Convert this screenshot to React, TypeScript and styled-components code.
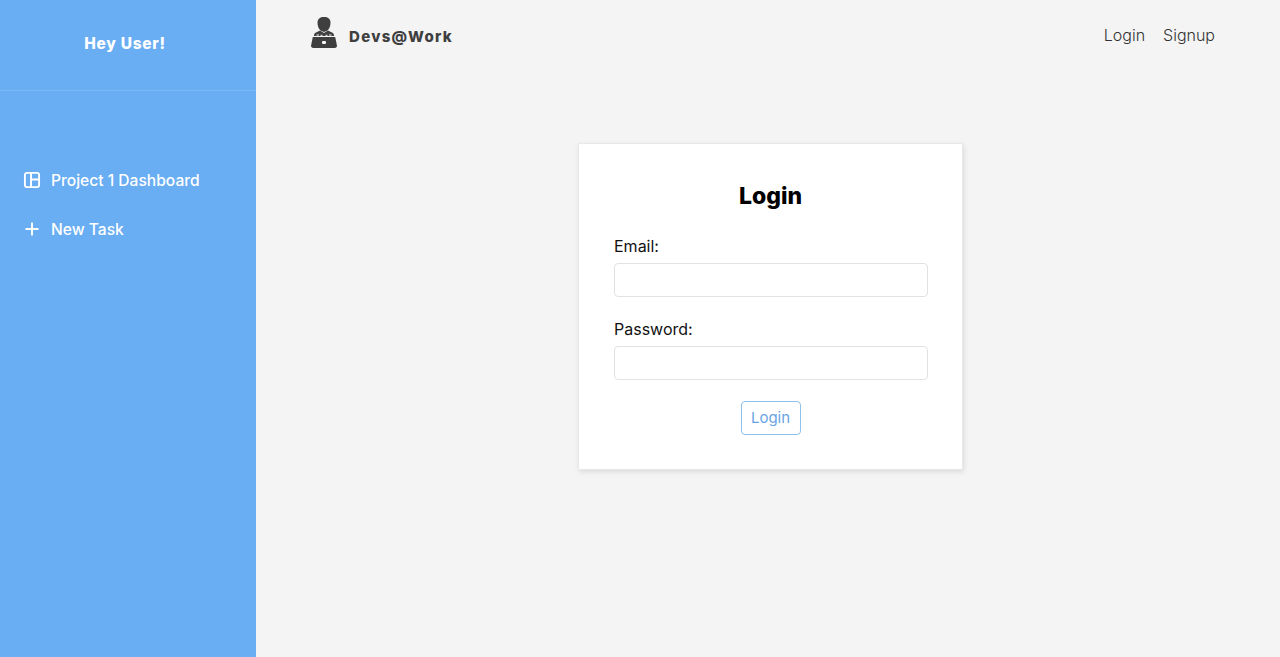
import styled, { createGlobalStyle } from 'styled-components';

const GlobalStyle = createGlobalStyle`
  html, body {
    margin: 0;
    padding: 0;
    height: 100%;
    background: #f4f4f4;
    font-family: Inter, "Liberation Sans", sans-serif;
  }
  * {
    box-sizing: border-box;
  }
`;

function LogoIcon() {
  return (
    <svg width="26" height="32" viewBox="0 0 26 32" fill="#3f3f3f">
      <path d="M13 0c4 0 6.500 2 6.500 5.500 0 3.500-1.200 6.500-3 8L13 15l-3.500-1.500c-1.800-1.500-3-4.500-3-8C6.500 2 9 0 13 0z" />
      <path d="M9 13.500l4 2.500 4-2.500 4.500 2.300c1 .6 1.500 1.500 1.500 3.200H3c0-1.700.5-2.600 1.500-3.200z" />
      <path d="M1.800 20h22.400L26 28.800c0 1.300-.9 2.200-2.200 2.200H2.200C.9 31 0 30.100 0 28.800z" />
      <path d="M5.500 18h2.500M9.500 18.300h2M14.500 18.300h2M18 18h2.500" stroke="#f4f4f4" strokeWidth="1" />
      <rect x="11" y="24" width="4" height="3" rx="1" fill="#f4f4f4" />
    </svg>
  );
}

function PanelIcon() {
  return (
    <svg width="18" height="18" viewBox="0 0 18 18" fill="none" stroke="#fff" strokeWidth="1.900">
      <rect x="1.900" y="1.900" width="14.200" height="14.200" rx="2" />
      <path d="M8 1.900v14.200M8 8.500h8.100" />
    </svg>
  );
}

function PlusIcon() {
  return (
    <svg width="18" height="18" viewBox="0 0 18 18" fill="none" stroke="#fff" strokeWidth="1.900">
      <path d="M9 2.500v13M2.500 9h13" />
    </svg>
  );
}

export default function App() {
  return (
    <>
      <GlobalStyle />
      <Page>
        <Sidebar>
          <SidebarHead>Hey User!</SidebarHead>
          <SideNav>
            <SideLink>
              <PanelIcon />
              Project 1 Dashboard
            </SideLink>
            <SideLink>
              <PlusIcon />
              New Task
            </SideLink>
          </SideNav>
        </Sidebar>
        <Main>
          <Navbar>
            <Brand>
              <LogoIcon />
              <BrandName>Devs@Work</BrandName>
            </Brand>
            <NavLinks>
              <NavLink>Login</NavLink>
              <NavLink>Signup</NavLink>
            </NavLinks>
          </Navbar>
          <Card>
            <Title>Login</Title>
            <Field>
              <Label>Email:</Label>
              <Input type="email" />
            </Field>
            <Field>
              <Label>Password:</Label>
              <Input type="password" />
            </Field>
            <SubmitButton>Login</SubmitButton>
          </Card>
        </Main>
      </Page>
    </>
  );
}

//****************************************************//

const Page = styled.div`
  display: flex;
  height: 657px;
  overflow: hidden;
`;

const Sidebar = styled.aside`
  width: 256px;
  flex-shrink: 0;
  background: #69adf3;
  color: #fff;
`;

const SidebarHead = styled.div`
  height: 91px;
  padding: 34px 6px 0 0;
  border-bottom: 1px solid #7ab8f6;
  text-align: center;
  font-size: 15.500px;
  font-weight: 800;
  line-height: 19px;
  letter-spacing: 0.7px;
`;

const SideNav = styled.nav`
  display: flex;
  flex-direction: column;
  gap: 25px;
  padding: 77px 0 0 23px;
`;

const SideLink = styled.a`
  display: flex;
  align-items: center;
  gap: 10px;
  height: 24px;
  font-size: 15.600px;
  font-weight: 500;
  color: #fff;
`;

const Main = styled.main`
  flex: 1;
  display: flex;
  flex-direction: column;
  align-items: center;
  padding-left: 5px;
`;

const Navbar = styled.header`
  align-self: stretch;
  display: flex;
  justify-content: space-between;
  align-items: flex-start;
  padding: 17px 65px 0 50px;
  height: 143px;
`;

const Brand = styled.div`
  display: flex;
  align-items: center;
  gap: 12px;
`;

const BrandName = styled.span`
  font-size: 15px;
  font-weight: 800;
  letter-spacing: 1.300px;
  color: #3f3f3f;
  position: relative;
  top: 3px;
`;

const NavLinks = styled.div`
  display: flex;
  gap: 18px;
  padding-top: 8px;
`;

const NavLink = styled.a`
  font-size: 16px;
  font-weight: 300;
  line-height: 20px;
  color: #333;
`;

const Card = styled.form`
  width: 385px;
  height: 327px;
  padding: 36px 35px 0;
  display: flex;
  flex-direction: column;
  background: #fff;
  border: 1px solid #e8e8e8;
  box-shadow: 1px 2px 5px rgba(0, 0, 0, 0.1);
`;

const Title = styled.h1`
  margin: 0 0 24px;
  height: 32px;
  text-align: center;
  font-size: 23px;
  font-weight: 800;
  line-height: 32px;
  color: #000;
`;

const Field = styled.div`
  display: flex;
  flex-direction: column;
  gap: 7px;
  margin-bottom: 22px;
`;

const Label = styled.label`
  font-size: 16px;
  line-height: 20px;
  color: #111;
`;

const Input = styled.input`
  width: 314px;
  height: 34px;
  border: 1px solid #e2e2e2;
  border-radius: 4px;
  background: #fff;
`;

const SubmitButton = styled.button`
  align-self: center;
  width: 60px;
  height: 34px;
  margin-top: -1px;
  padding: 0 0 2px;
  background: #fff;
  border: 1px solid #8fc0ee;
  border-radius: 4px;
  font-family: Inter, "Liberation Sans", sans-serif;
  font-size: 15px;
  color: #68a4e4;
`;
